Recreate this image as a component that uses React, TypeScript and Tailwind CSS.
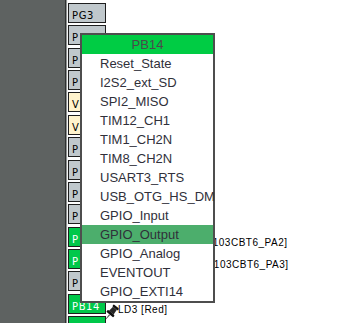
import React from "react";

type Pin = { label: string; kind: "gray" | "yellow" | "green"; note?: string; pushpin?: boolean };

const pins: Pin[] = [
  { label: "PG3", kind: "gray" },
  { label: "P", kind: "gray" },
  { label: "P", kind: "gray" },
  { label: "P", kind: "gray" },
  { label: "V", kind: "yellow" },
  { label: "V", kind: "yellow" },
  { label: "P", kind: "gray" },
  { label: "P", kind: "gray" },
  { label: "P", kind: "gray" },
  { label: "P", kind: "gray" },
  { label: "P", kind: "green", note: "STLK_TX [STM32F103CBT6_PA2]" },
  { label: "P", kind: "green", note: "STLK_RX [STM32F103CBT6_PA3]" },
  { label: "P", kind: "gray" },
  { label: "PB14", kind: "green", note: "LD3 [Red]", pushpin: true },
  { label: "", kind: "green" },
];

const items = [
  "Reset_State",
  "I2S2_ext_SD",
  "SPI2_MISO",
  "TIM12_CH1",
  "TIM1_CH2N",
  "TIM8_CH2N",
  "USART3_RTS",
  "USB_OTG_HS_DM",
  "GPIO_Input",
  "GPIO_Output",
  "GPIO_Analog",
  "EVENTOUT",
  "GPIO_EXTI14",
];

function PushPin() {
  return (
    <svg width="18" height="20" viewBox="0 0 18 20" className="absolute left-[34px] top-[10px]">
      <g transform="rotate(40 9 9)">
        <rect x="5.5" y="0.5" width="7" height="2.5" rx="1" fill="#111" />
        <path d="M6.6 3 L11.4 3 L12 8.5 L6 8.5 Z" fill="#262626" />
        <rect x="4.5" y="8.5" width="9" height="2.6" rx="1" fill="#111" />
        <path d="M8.3 11.1 L9.7 11.1 L9.2 19 L8.8 19 Z" fill="#555" />
      </g>
    </svg>
  );
}

export default function App() {
  return (
    <div className="relative w-[350px] h-[323px] overflow-hidden bg-white flex" style={{ fontFamily: "'Liberation Sans', Arial, sans-serif" }}>
      <div className="w-[65px] h-full bg-[#5e6261]" />
      <div className="w-[1px] h-full bg-[#2f3131]" />
      <div className="w-[1px] h-full bg-[#8f9392]" />
      <div className="w-[1px] h-full bg-[#f4f4f4]" />
      <div className="flex flex-col pt-[3px]">
        {pins.map((p, i) => (
          <div key={i} className="relative h-[22.36px] flex items-start shrink-0">
            <div
              className={
                "w-[38px] h-[20px] border border-[#1e1e1e] flex items-end pl-[3px] pb-[1px] leading-[10px] text-[10px] tracking-[0.6px] " +
                (p.kind === "gray"
                  ? "bg-[#c0c8cc] text-black"
                  : p.kind === "yellow"
                  ? "bg-[#fff3cc] text-black"
                  : "bg-[#00c84a] text-white")
              }
              style={{ fontFamily: "'DejaVu Sans', sans-serif" }}
            >
              {p.label}
            </div>
            {p.note && (
              <div className="ml-[12px] mt-[10px] whitespace-nowrap text-[10px] leading-[12px] tracking-[0.5px] text-black">
                {p.note}
              </div>
            )}
            {p.pushpin && <PushPin />}
          </div>
        ))}
      </div>

      <div className="absolute left-[80px] top-[33px] w-[135px] h-[270px] border-2 border-[#4e4e4e] bg-white flex flex-col">
        <div className="h-[19px] bg-[#00cc44] text-[#4a4a4a] text-[13px] leading-[19px] text-center">PB14</div>
        {items.map((it) => (
          <div
            key={it}
            className={
              "h-[19px] pl-[18px] text-[13px] leading-[19px] whitespace-nowrap text-[#30303a] " +
              (it === "GPIO_Output" ? "bg-[#4cae6c]" : "")
            }
          >
            {it}
          </div>
        ))}
      </div>
    </div>
  );
}
